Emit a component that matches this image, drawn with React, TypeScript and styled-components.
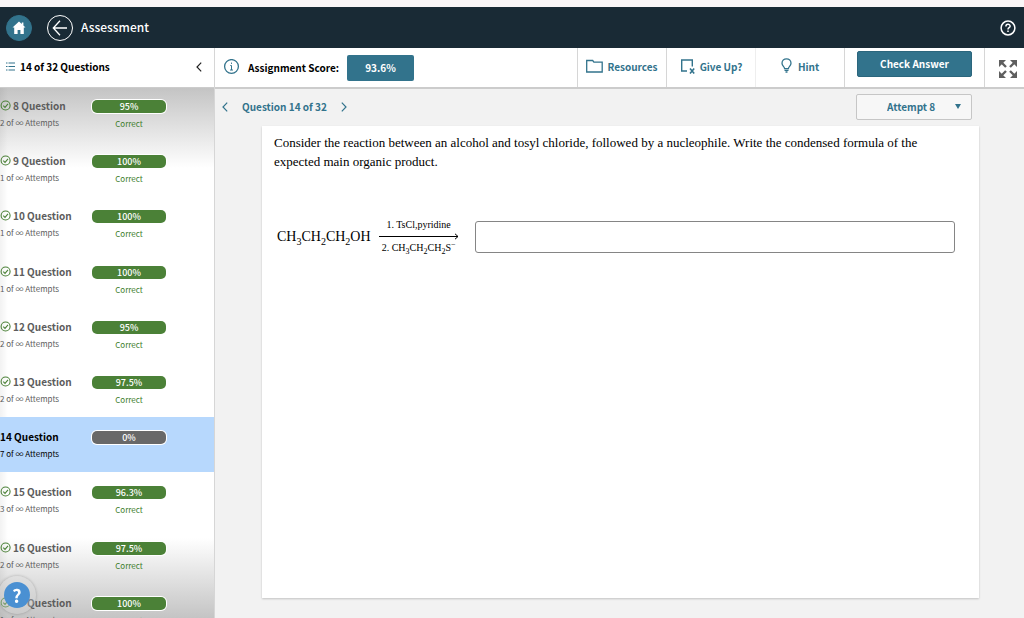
import React from "react";
import styled, { createGlobalStyle, css } from "styled-components";

const TEAL = "#32738c";
const GREEN = "#4b8137";
const sans = `"Noto Sans CJK SC", "Open Sans", sans-serif`;

const GlobalStyle = createGlobalStyle`
  * { box-sizing: border-box; }
  body {
    margin: 0;
    background: #f2f2f2;
    font-family: ${sans};
    font-size: 10px;
    line-height: 16px;
    color: #000;
  }
  button, input, select { font: inherit; color: inherit; }
  a { color: inherit; text-decoration: none; }
  svg { display: block; flex: none; }
`;

const Page = styled.div`
  height: 100vh;
  display: flex;
  flex-direction: column;
  overflow: hidden;
  border-top: 7px solid #faf6f7;
`;

const TopBar = styled.header`
  flex: none;
  height: 41px;
  display: flex;
  align-items: center;
  padding: 0 8px 0 6px;
  background: #192a35;
  color: #fff;
`;

const RoundButton = styled.button<{ $filled?: boolean }>`
  width: 26px;
  height: 26px;
  padding: 0;
  display: grid;
  place-items: center;
  border: 1px solid ${(p) => (p.$filled ? TEAL : "#fff")};
  border-radius: 50%;
  background: ${(p) => (p.$filled ? TEAL : "transparent")};
  color: #fff;
`;

const TopGroup = styled.div`
  flex: 1;
  display: flex;
  align-items: center;
  gap: 15px;
`;

const BackGroup = styled.div`
  display: flex;
  align-items: center;
  gap: 8px;
`;

const AppTitle = styled.h1`
  margin: 0;
  padding-bottom: 2px;
  font-size: 12px;
  font-weight: 500;
`;

const IconButton = styled.button`
  padding: 0;
  border: 0;
  background: none;
`;

const Body = styled.div`
  flex: 1;
  min-height: 0;
  display: flex;
`;

const Sidebar = styled.aside`
  flex: none;
  width: 215px;
  display: flex;
  flex-direction: column;
  border-right: 1px solid #d6d6d6;
  background: #fff;
`;

const SidebarHead = styled.div`
  flex: none;
  height: 40px;
  display: flex;
  align-items: center;
  justify-content: space-between;
  padding: 0 12px 2px 6px;
  border-bottom: 1px solid #ccc;
`;

const SidebarTitle = styled.h2`
  margin: 0;
  display: flex;
  align-items: center;
  gap: 5px;
  font-size: 10px;
`;

const ListFrame = styled.nav`
  flex: 1;
  min-height: 0;
  overflow: hidden;
  background:
    linear-gradient(to right, rgba(0, 0, 0, 0.05), transparent 8px),
    linear-gradient(to bottom, #c4c4c4, rgba(255, 255, 255, 0) 80px),
    linear-gradient(to top, #c4c4c4, rgba(255, 255, 255, 0) 80px),
    #fff;
`;

const QuestionList = styled.ul`
  min-height: 552px;
  margin: -2px 0 0;
  padding: 0;
  list-style: none;
  display: grid;
  grid-auto-rows: 1fr;
`;

const QuestionLink = styled.a<{ $current?: boolean }>`
  height: 100%;
  display: flex;
  padding-top: 12px;
  color: ${(p) => (p.$current ? "#000" : "#5d5d5d")};
  background: ${(p) => (p.$current ? "#b7d8fd" : "transparent")};
`;

const QuestionInfo = styled.div`
  width: 92px;
`;

const QuestionName = styled.div`
  display: flex;
  align-items: center;
  gap: 1px;
  font-weight: 700;
`;

const Attempts = styled.div`
  padding-top: 1px;
  font-size: 8px;
`;

const Result = styled.div`
  width: 74px;
  padding-top: 2px;
  text-align: center;
`;

const Pill = styled.div<{ $empty?: boolean }>`
  height: 13px;
  border-radius: 5px;
  box-shadow: 0 0 0 1px #fff;
  background: ${(p) => (p.$empty ? "#686868" : GREEN)};
  color: #fff;
  font-size: 9px;
  line-height: 13px;
  font-weight: 500;
`;

const Verdict = styled.div`
  padding-top: 3px;
  color: #3d7d2a;
  font-size: 8px;
`;

const Main = styled.main`
  flex: 1;
  min-width: 0;
  display: flex;
  flex-direction: column;
`;

const Toolbar = styled.div`
  flex: none;
  height: 41px;
  display: flex;
  background: #fff;
  border-bottom: 2px solid #ccc;
`;

const Score = styled.div`
  flex: 1;
  display: flex;
  align-items: center;
  padding-left: 8px;
  font-weight: 700;
`;

const ScoreLabel = styled.span`
  width: 91px;
  margin: 0 8px;
  white-space: nowrap;
`;

const ScoreValue = styled.output`
  width: 67px;
  height: 26px;
  border-radius: 2px;
  background: ${TEAL};
  color: #fff;
  line-height: 26px;
  text-align: center;
`;

const Tool = styled.button<{ $faint?: boolean }>`
  width: 89px;
  display: flex;
  align-items: center;
  justify-content: center;
  gap: ${(p) => (p.$faint ? 6 : 4)}px;
  padding: 0 0 2px;
  border: 0;
  border-left: 1px solid ${(p) => (p.$faint ? "#eee" : "#d6d6d6")};
  background: none;
  color: ${TEAL};
  font-weight: 700;
  white-space: nowrap;
`;

const CheckCell = styled.div`
  width: 140px;
  padding: 3px 12px;
  border-left: 1px solid #d6d6d6;
`;

const CheckButton = styled.button`
  width: 100%;
  height: 26px;
  padding: 0;
  border: 1px solid #2b667d;
  border-radius: 2px;
  background: ${TEAL};
  color: #fff;
  font-weight: 700;
`;

const ExpandCell = styled.button`
  width: 40px;
  padding: 3px 0 0 7px;
  display: grid;
  place-items: center;
  border: 0;
  border-left: 1px solid #d6d6d6;
  background: none;
`;

const QuestionBar = styled.div`
  flex: none;
  height: 37px;
  display: flex;
  align-items: center;
  justify-content: space-between;
  padding: 0 52px 2px 7px;
  color: ${TEAL};
  font-weight: 700;
`;

const Pager = styled.div`
  display: flex;
  align-items: center;
  gap: 14px;
`;

const AttemptBox = styled.label`
  position: relative;
  width: 116px;
  height: 26px;

  svg {
    position: absolute;
    right: 11px;
    top: 10px;
    pointer-events: none;
  }
`;

const AttemptSelect = styled.select`
  appearance: none;
  width: 100%;
  height: 100%;
  padding: 0 30px;
  border: 1px solid #c6c6c6;
  border-radius: 2px;
  background: #f7f7f7;
  font-weight: 700;
`;

const serif = css`
  font-family: "Liberation Serif", serif;
`;

const Card = styled.section`
  ${serif}
  flex: 1;
  margin: 0 45px 20px 47px;
  padding: 7px 24px 0 12px;
  background: #fff;
  box-shadow: 0 1px 2px rgba(0, 0, 0, 0.2);
`;

const Prompt = styled.p`
  margin: 0;
  font-size: 13px;
  line-height: 19px;
`;

const Reaction = styled.div`
  display: flex;
  align-items: center;
  padding: 47px 0 0 3px;
`;

const Formula = styled.span<{ $small?: boolean }>`
  font-size: ${(p) => (p.$small ? "10px" : "14px")};
  line-height: 14px;
  white-space: nowrap;

  sub, sup { font-size: ${(p) => (p.$small ? "8px" : "10px")}; line-height: 0; }
`;

const ArrowStack = styled.div`
  width: 80px;
  margin: 0 16px 0 8px;
  display: flex;
  flex-direction: column;
  align-items: center;
  gap: 1px;
`;

const Answer = styled.input`
  flex: 1;
  min-width: 0;
  height: 32px;
  padding: 0 8px;
  border: 1px solid #858585;
  border-radius: 3px;
  background: #fff;
`;

const HelpBubble = styled.button`
  position: fixed;
  left: -2px;
  bottom: 4px;
  width: 38px;
  height: 38px;
  padding: 0;
  display: grid;
  place-items: center;
  border: 0;
  border-radius: 50%;
  background: rgba(214, 214, 214, 0.3);
  box-shadow: 0 0 3px rgba(0, 0, 0, 0.25);
`;

const HelpMark = styled.span`
  width: 26px;
  height: 26px;
  border-radius: 50%;
  background: #4a90d2;
  color: #fff;
  font-size: 18px;
  line-height: 26px;
  font-weight: 700;
`;

const Chevron = ({ right, color = TEAL }: { right?: boolean; color?: string }) => (
  <svg width="6" height="10" viewBox="0 0 6 10" fill="none" stroke={color} strokeWidth="1.2">
    <path d={right ? "M.8.6 5 5 .8 9.4" : "M5.2.6 1 5l4.2 4.4"} />
  </svg>
);

const CheckMark = () => (
  <svg width="12" height="12" viewBox="0 0 12 12" fill="none" stroke={GREEN} strokeWidth="1.1">
    <circle cx="5.6" cy="5.5" r="4.5" />
    <path d="m3.3 5.7 1.7 1.7 3-3.6" />
  </svg>
);

type Question = { n: number; tries: number; score: string };

const questions: Question[] = [
  { n: 8, tries: 2, score: "95%" },
  { n: 9, tries: 1, score: "100%" },
  { n: 10, tries: 1, score: "100%" },
  { n: 11, tries: 1, score: "100%" },
  { n: 12, tries: 2, score: "95%" },
  { n: 13, tries: 2, score: "97.5%" },
  { n: 14, tries: 7, score: "0%" },
  { n: 15, tries: 3, score: "96.3%" },
  { n: 16, tries: 2, score: "97.5%" },
  { n: 17, tries: 1, score: "100%" },
];

const CURRENT = 14;

const QuestionRow = ({ n, tries, score }: Question) => {
  const current = n === CURRENT;
  return (
    <li>
      <QuestionLink href={`#q${n}`} $current={current}>
        <QuestionInfo>
          <QuestionName>
            {!current && <CheckMark />}
            <span>{n} Question</span>
          </QuestionName>
          <Attempts>{tries} of ∞ Attempts</Attempts>
        </QuestionInfo>
        <Result>
          <Pill $empty={current}>{score}</Pill>
          {!current && <Verdict>Correct</Verdict>}
        </Result>
      </QuestionLink>
    </li>
  );
};

export default function App() {
  return (
    <Page>
      <GlobalStyle />
      <TopBar>
        <TopGroup>
          <RoundButton $filled aria-label="Home">
            <svg width="14" height="14" viewBox="0 0 14 14" fill="#fff">
              <path d="M7 .5.5 6.6h1.7V13h3.4V9h2.8v4h3.4V6.6h1.7L11.4 4.5V1.5H9.8V3.1z" />
            </svg>
          </RoundButton>
          <BackGroup>
            <RoundButton aria-label="Back">
              <svg width="16" height="16" viewBox="0 0 16 16" fill="none" stroke="#fff" strokeWidth="1.3">
                <path d="M8 .8 1.3 8 8 15.2M1.3 8H15" />
              </svg>
            </RoundButton>
            <AppTitle>Assessment</AppTitle>
          </BackGroup>
        </TopGroup>
        <IconButton aria-label="Help">
          <svg width="16" height="16" viewBox="0 0 16 16" fill="none" stroke="#fff" strokeWidth="1.5">
            <circle cx="8" cy="8" r="6.9" />
            <path d="M5.9 6.5C5.9 3.6 10.1 3.7 10.1 6.2 10.1 7.7 8 7.6 8 9.4M8 10.6V12" />
          </svg>
        </IconButton>
      </TopBar>

      <Body>
        <Sidebar>
          <SidebarHead>
            <SidebarTitle>
              <svg width="9" height="9" viewBox="0 0 9 9" stroke={TEAL} strokeWidth="1.2">
                <path d="M0 1h1.5M0 4.5h1.5M0 8h1.5M2.5 1H9M2.5 4.5H9M2.5 8H9" />
              </svg>
              14 of 32 Questions
            </SidebarTitle>
            <IconButton aria-label="Collapse">
              <Chevron color="#222" />
            </IconButton>
          </SidebarHead>
          <ListFrame aria-label="Questions">
            <QuestionList>
              {questions.map((q) => (
                <QuestionRow key={q.n} {...q} />
              ))}
            </QuestionList>
          </ListFrame>
        </Sidebar>

        <Main>
          <Toolbar>
            <Score>
              <svg width="17" height="17" viewBox="0 0 17 17" fill="none" stroke={TEAL}>
                <circle cx="8.5" cy="7.5" r="6.9" strokeWidth="1.3" />
                <path d="M8.5 3.6v1.3M7.3 6.5h1.2v4.5M7 11h3" />
              </svg>
              <ScoreLabel>Assignment Score:</ScoreLabel>
              <ScoreValue>93.6%</ScoreValue>
            </Score>
            <Tool>
              <svg width="17" height="16" viewBox="0 0 17 16" fill="none" stroke={TEAL} strokeWidth="1.3">
                <path d="M.7 13V1.5h6l1.2 1.6h8.300V13z" />
              </svg>
              Resources
            </Tool>
            <Tool>
              <svg width="16" height="17" viewBox="0 0 16 17" fill="none" stroke={TEAL} strokeWidth="1.4">
                <path d="M7 13H1.7V2h10.600V8.500" />
                <path d="m10 10.500 4.200 5M14.200 10.500l-4.200 5" strokeWidth="1.6" />
              </svg>
              Give Up?
            </Tool>
            <Tool $faint>
              <svg width="11" height="17" viewBox="0 0 11 17" fill="none" stroke={TEAL} strokeWidth="1.3">
                <path d="M3.6 10.700C3.600 8.500 1 8 1 5.200a4.500 4.400 0 0 1 9 0c0 2.800-2.600 3.300-2.600 5.500zM3.500 12.400h4M4.500 14h2" />
              </svg>
              Hint
            </Tool>
            <CheckCell>
              <CheckButton>Check Answer</CheckButton>
            </CheckCell>
            <ExpandCell aria-label="Full screen">
              <svg width="18" height="18" viewBox="0 0 18 18" fill="#5f5f5f" stroke="#5f5f5f" strokeWidth="2.4">
                <path stroke="none" d="M0 0h7L0 7zM18 0v7l-7-7zM0 18v-7l7 7zM18 18h-7l7-7z" />
                <path d="m2 2 5 5M16 2l-5 5M2 16l5-5M16 16l-5-5" />
              </svg>
            </ExpandCell>
          </Toolbar>

          <QuestionBar>
            <Pager>
              <IconButton aria-label="Previous question">
                <Chevron />
              </IconButton>
              <span>Question 14 of 32</span>
              <IconButton aria-label="Next question">
                <Chevron right />
              </IconButton>
            </Pager>
            <AttemptBox>
              <AttemptSelect aria-label="Attempt" defaultValue="8">
                <option value="8">Attempt 8</option>
              </AttemptSelect>
              <svg width="6" height="5" viewBox="0 0 6 5" fill={TEAL}>
                <path d="M0 0h6L3 5z" />
              </svg>
            </AttemptBox>
          </QuestionBar>

          <Card>
            <Prompt>
              Consider the reaction between an alcohol and tosyl chloride, followed by a nucleophile. Write the
              condensed formula of the expected main organic product.
            </Prompt>
            <Reaction>
              <Formula>
                CH<sub>3</sub>CH<sub>2</sub>CH<sub>2</sub>OH
              </Formula>
              <ArrowStack>
                <Formula $small>1. TsCl,pyridine</Formula>
                <svg width="80" height="7" viewBox="0 0 80 7" fill="none" stroke="#000">
                  <path d="M0 3.5h79M76 .8l3 2.7-3 2.7" />
                </svg>
                <Formula $small>
                  2. CH<sub>3</sub>CH<sub>2</sub>CH<sub>2</sub>S<sup>−</sup>
                </Formula>
              </ArrowStack>
              <Answer aria-label="Product formula" />
            </Reaction>
          </Card>
        </Main>
      </Body>

      <HelpBubble aria-label="Get help">
        <HelpMark>?</HelpMark>
      </HelpBubble>
    </Page>
  );
}
